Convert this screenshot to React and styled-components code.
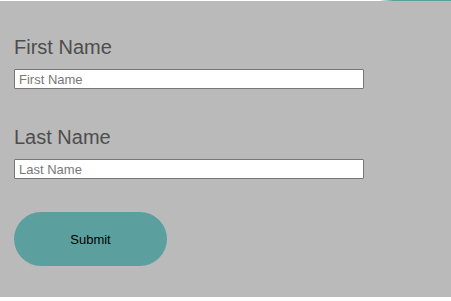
import React from "react";
import styled, { createGlobalStyle } from "styled-components";

const Global = createGlobalStyle`
  html, body { margin: 0; padding: 0; background: #ffffff; }
  body { font-family: "Liberation Sans", Arial, sans-serif; }
`;

const TopBar = styled.div`
  display: flex;
  justify-content: flex-end;
  height: 1px;
  background: #ffffff;
`;

const TealTab = styled.div`
  width: 70px;
  height: 1px;
  background: linear-gradient(to right, rgba(91,160,159,0.2), #5ba09f 12px);
`;

const Panel = styled.form`
  background: #bababa;
  height: 296px;
  box-sizing: border-box;
  padding: 35px 0 0 14px;
  display: flex;
  flex-direction: column;
  align-items: flex-start;
`;

const Field = styled.div`
  display: flex;
  flex-direction: column;
  align-items: flex-start;
  margin-bottom: ${(p) => p.$gap}px;
`;

const Label = styled.label`
  font-size: 20px;
  line-height: 22px;
  color: #4d4d4d;
  margin-bottom: 11px;
`;

const Input = styled.input`
  width: 350px;
  height: 20px;
  box-sizing: border-box;
  margin: 0;
  border: 1px solid #767676;
  border-radius: 1px;
  background: #ffffff;
  padding: 0 4px;
  font-family: "Liberation Sans", Arial, sans-serif;
  font-size: 13px;
  color: #333;
  &::placeholder { color: #777777; }
`;

const Button = styled.button`
  width: 153px;
  height: 54px;
  border: none;
  border-radius: 27px;
  background: #5ba09f;
  color: #000000;
  font-family: "Liberation Sans", Arial, sans-serif;
  font-size: 13px;
  cursor: pointer;
`;

export default function App() {
  return (
    <>
      <Global />
      <TopBar>
        <TealTab />
      </TopBar>
      <Panel onSubmit={(e) => e.preventDefault()}>
        <Field $gap={37}>
          <Label htmlFor="first">First Name</Label>
          <Input id="first" placeholder="First Name" />
        </Field>
        <Field $gap={33}>
          <Label htmlFor="last">Last Name</Label>
          <Input id="last" placeholder="Last Name" />
        </Field>
        <Button type="submit">Submit</Button>
      </Panel>
    </>
  );
}
